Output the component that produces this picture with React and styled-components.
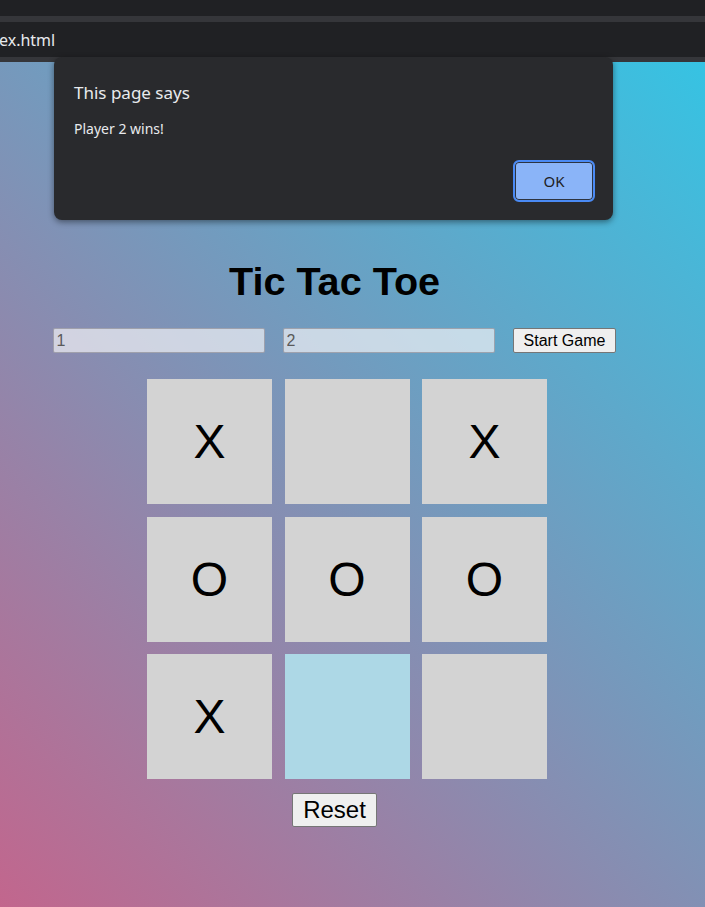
import React from "react";
import styled, { createGlobalStyle } from "styled-components";

const GlobalStyle = createGlobalStyle`
  html, body {
    margin: 0;
    padding: 0;
    background: #202124;
  }
`;

const Window = styled.div`
  position: relative;
  width: 705px;
  height: 907px;
  overflow: hidden;
`;

const TabStrip = styled.div`
  height: 16px;
  background: #202124;
`;

const Divider = styled.div`
  height: ${p => p.$h}px;
  background: #35363a;
`;

const AddressBar = styled.div`
  height: 35px;
  background: #202124;
  display: flex;
  align-items: center;
`;

const Url = styled.span`
  font-family: "Noto Sans", "Liberation Sans", sans-serif;
  font-size: 16px;
  color: #e8eaed;
  margin-left: -1px;
`;

const Page = styled.main`
  height: 845px;
  background: linear-gradient(45deg, #c2668d 0%, #36c3e3 100%);
  font-family: "Liberation Sans", Arial, sans-serif;
`;

const Column = styled.div`
  width: 669px;
  display: flex;
  flex-direction: column;
  align-items: center;
  padding-top: 197px;
`;

const Title = styled.h1`
  margin: 0;
  font-size: 39.6px;
  font-weight: bold;
  color: #000;
  line-height: 44px;
`;

const PlayerRow = styled.div`
  display: flex;
  gap: 18px;
  margin-top: 25px;
`;

const NameInput = styled.input`
  box-sizing: border-box;
  width: 212px;
  height: 25px;
  padding: 0 3px;
  border: 1px solid rgba(140, 140, 150, 0.7);
  border-radius: 2px;
  background: rgba(245, 245, 248, 0.68);
  color: #5a5a5a;
  font-family: "Liberation Sans", Arial, sans-serif;
  font-size: 16px;
`;

const Button = styled.button`
  box-sizing: border-box;
  height: ${p => p.$h}px;
  padding: 0 ${p => p.$pad}px;
  border: 1px solid #767676;
  border-radius: 2px;
  background: #efefef;
  color: #000;
  font-family: "Liberation Sans", Arial, sans-serif;
  font-size: ${p => p.$size}px;
  line-height: 1;
`;

const Board = styled.div`
  display: grid;
  grid-template-columns: repeat(3, 125px);
  grid-auto-rows: 125px;
  gap: 12.5px;
  margin-top: 26px;
  margin-left: 25px;
`;

const Cell = styled.div`
  display: flex;
  align-items: center;
  justify-content: center;
  background: ${p => (p.$hover ? "#add8e6" : "#d3d3d3")};
  font-size: 48px;
  color: #000;
`;

const ResetRow = styled.div`
  margin-top: 14px;
`;

const Alert = styled.div`
  position: absolute;
  top: 57px;
  left: 54px;
  width: 559px;
  height: 163px;
  box-sizing: border-box;
  padding: 25px 18px 18px 20px;
  display: flex;
  flex-direction: column;
  background: #292a2d;
  border-radius: 8px;
  box-shadow: 0 2px 6px rgba(0, 0, 0, 0.45);
  font-family: "Noto Sans", "Open Sans", sans-serif;
  color: #e8eaed;
`;

const AlertTitle = styled.div`
  font-size: 17px;
  line-height: 22px;
`;

const AlertText = styled.div`
  font-size: 14px;
  line-height: 18px;
  margin-top: 16px;
`;

const AlertFooter = styled.div`
  margin-top: auto;
  display: flex;
  justify-content: flex-end;
`;

const OkButton = styled.button`
  box-sizing: border-box;
  width: 82px;
  height: 42px;
  border: 2px solid #4a8af4;
  border-radius: 6px;
  box-shadow: inset 0 0 0 1px #2d3440;
  background: #8ab4f8;
  color: #202124;
  font-family: "Noto Sans", "Open Sans", sans-serif;
  font-size: 15px;
`;

const cells = ["X", "", "X", "O", "O", "O", "X", "", ""];

export default function App() {
  return (
    <Window>
      <GlobalStyle />
      <TabStrip />
      <Divider $h={6} />
      <AddressBar>
        <Url>ex.html</Url>
      </AddressBar>
      <Divider $h={5} />
      <Page>
        <Column>
          <Title>Tic Tac Toe</Title>
          <PlayerRow>
            <NameInput defaultValue="1" disabled />
            <NameInput defaultValue="2" disabled />
            <Button $h={25} $pad={10} $size={16}>Start Game</Button>
          </PlayerRow>
          <Board>
            {cells.map((mark, i) => (
              <Cell key={i} $hover={i === 7}>{mark}</Cell>
            ))}
          </Board>
          <ResetRow>
            <Button $h={34} $pad={10} $size={24}>Reset</Button>
          </ResetRow>
        </Column>
      </Page>
      <Alert>
        <AlertTitle>This page says</AlertTitle>
        <AlertText>Player 2 wins!</AlertText>
        <AlertFooter>
          <OkButton>OK</OkButton>
        </AlertFooter>
      </Alert>
    </Window>
  );
}
